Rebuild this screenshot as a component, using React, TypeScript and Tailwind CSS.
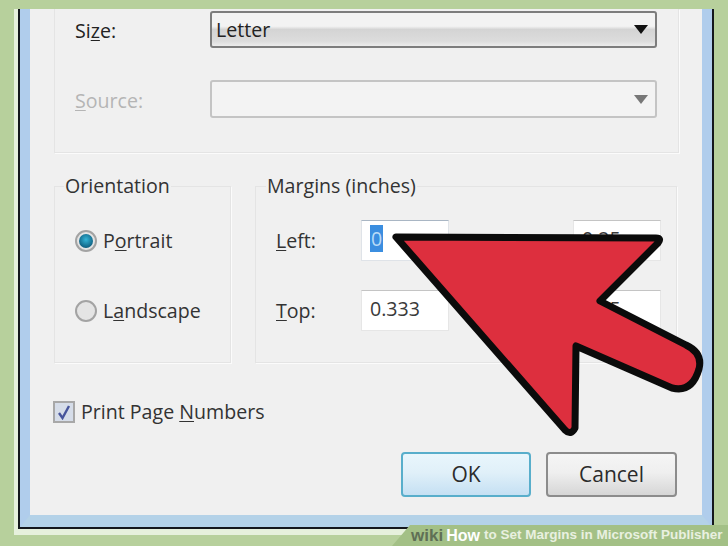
const font = "font-['Open_Sans','Noto_Sans',sans-serif]";

const Caret = ({ color }: { color: string }) => (
  <svg width="14" height="9" viewBox="0 0 14 9" className="shrink-0">
    <path d="M0 0H14L7 9Z" fill={color} />
  </svg>
);

const NumberBox = ({ value, selected, dark }: { value: string; selected?: boolean; dark?: boolean }) => (
  <div
    className={`flex h-[41px] w-[88px] items-center border bg-white pb-1 pl-[8px] text-[19.6px] text-[#3a3a3a] ${
      dark ? "border-[#dfe3e8] border-t-[#a9b6c4]" : "border-[#e6e6e6] border-t-[#c4c4c4]"
    }`}
  >
    {selected ? <span className="bg-[#3b8ee0] px-px leading-[27px] text-[#b9dcf7]">{value}</span> : value}
  </div>
);

const Radio = ({ checked, children }: { checked?: boolean; children: React.ReactNode }) => (
  <div className="flex h-6 items-center gap-[6px]">
    <span className="flex h-[22px] w-[22px] items-center justify-center rounded-full border-2 border-[#a3a3a3] bg-[#e4e4e4]">
      {checked ? (
        <span className="h-[14px] w-[14px] rounded-full bg-[radial-gradient(circle_at_50%_40%,#35b4d6,#0f5f80_75%)]" />
      ) : null}
    </span>
    <span className="text-[19.6px] text-[#333]">{children}</span>
  </div>
);

export default function App() {
  return (
    <div className={`relative h-[546px] w-[728px] overflow-hidden bg-[#b7d09c] pt-[9px] pl-[14px] ${font}`}>
      <div className="h-[526px] w-[700px] border-b-[6px] border-l-[4px] border-[#e6f0dc]">
        <div className="h-full border-x-2 border-b-2 border-[#14171c]">
          <div className="h-full border-x-[10px] border-b-[12px] border-x-[#b0cdec] border-b-[#b4d2e8]">
            <div className="flex h-full flex-col bg-[#f0f0f0] pr-[23px] pl-[24px]">
              {/* page size group, top edge is cropped */}
              <div className="h-[144px] border-x border-b border-[#e4e4e4] shadow-[1px_1px_0_#fbfbfb]">
                <div className="mt-[2px] flex h-[37px] items-center pl-[20px] text-[19.6px] text-[#222]">
                  <span className="mt-[3px] w-[135px]">
                    Si<u className="underline-offset-2">z</u>e:
                  </span>
                  <div className="flex h-[37px] w-[447px] items-center justify-between rounded-[3px] border-2 border-[#7d7d7d] bg-[linear-gradient(#f3f3f3_40%,#d4d4d4_50%,#dcdcdc_85%,#ececec)] pr-[7px] pl-[4px] text-[#222]">
                    Letter
                    <Caret color="#111" />
                  </div>
                </div>
                <div className="mt-[32px] flex h-[38px] items-center pl-[20px] text-[19.6px] text-[#b5b5b5]">
                  <span className="mt-[3px] w-[135px]">
                    <u className="underline-offset-2">S</u>ource:
                  </span>
                  <div className="flex h-[38px] w-[447px] items-center justify-end rounded-[3px] border-2 border-[#c4c4c4] bg-[#f3f3f3] pr-[7px]">
                    <Caret color="#777" />
                  </div>
                </div>
              </div>

              <div className="mt-[21px] flex gap-[24px]">
                <fieldset className="h-[189px] w-[177px] border border-[#e4e4e4] pl-[20px] shadow-[1px_1px_0_#fbfbfb]">
                  <legend className="ml-[-11px] px-px text-[19.6px] leading-6 text-[#333]">Orientation</legend>
                  <div className="flex flex-col gap-[46px] pt-[31px]">
                    <Radio checked>
                      P<u className="underline-offset-2">o</u>rtrait
                    </Radio>
                    <Radio>
                      L<u className="underline-offset-2">a</u>ndscape
                    </Radio>
                  </div>
                </fieldset>
                <fieldset className="h-[189px] w-[422px] border border-[#e4e4e4] pr-[15px] pl-[20px] shadow-[1px_1px_0_#fbfbfb]">
                  <legend className="ml-[-10px] px-px text-[19.6px] leading-6 text-[#333]">Margins (inches)</legend>
                  <div className="flex flex-col gap-[29px] pt-[22px] text-[19.6px] text-[#333]">
                    <div className="flex items-center justify-between">
                      <div className="flex items-center">
                        <span className="w-[85px]">
                          <u className="underline-offset-2">L</u>eft:
                        </span>
                        <NumberBox value="0" selected dark />
                      </div>
                      <NumberBox value="0.25" />
                    </div>
                    <div className="flex items-center justify-between">
                      <div className="flex items-center">
                        <span className="w-[85px]">
                          <u className="underline-offset-2">T</u>op:
                        </span>
                        <NumberBox value="0.333" />
                      </div>
                      <NumberBox value="0.25" />
                    </div>
                  </div>
                </fieldset>
              </div>

              <div className="mt-[37px] -ml-px flex h-6 items-center gap-[6px] text-[19.6px] text-[#333]">
                <span className="flex h-[22px] w-[22px] items-center justify-center border-2 border-[#a8a8a8] bg-[#d6dde9]">
                  <svg width="16" height="16" viewBox="0 0 16 16" fill="none">
                    <path d="M3 9L6.5 14L13 2" stroke="#47559c" strokeWidth="2.4" />
                  </svg>
                </span>
                <span>
                  Print Page <u className="underline-offset-2">N</u>umbers
                </span>
              </div>

              <div className="mt-[28px] flex justify-end gap-[15px] pr-[2px] text-[21px] text-[#2b2b2b]">
                <button className="h-[45px] w-[130px] rounded-[4px] border-2 border-[#58aecb] bg-[linear-gradient(#e9f6fc,#e0f0f9_45%,#c5e0f3)]">
                  OK
                </button>
                <button className="h-[45px] w-[131px] rounded-[4px] border-2 border-[#8c8c8c] bg-[linear-gradient(#f5f5f5,#efefef_45%,#d6d6d6)]">
                  Cancel
                </button>
              </div>
            </div>
          </div>
        </div>
      </div>

      {/* big pointer drawn over the dialog */}
      <svg width="728" height="546" viewBox="0 0 728 546" className="absolute top-0 left-0">
        <path
          d="M396 237L656 238Q662 238 658 243L600 301L686 345Q703 353 699 369Q692 393 672 388L576 346L575 428Q571 436 565 430Z"
          fill="#dd2f3e"
          stroke="#0b0b0b"
          strokeWidth="7"
          strokeLinejoin="round"
        />
      </svg>

      {/* watermark */}
      <div className="absolute right-0 bottom-0 flex h-[21px] w-[336px] items-center bg-[#a3c086] pl-[19px] [clip-path:polygon(18px_0,100%_0,100%_100%,0_100%)] font-['Liberation_Sans',sans-serif] text-[13.5px] font-bold whitespace-nowrap text-[#e9f0e0]">
        <span className="text-[17px] text-[#5f6f55]">wiki</span>
        <span className="ml-[3px] text-[16px] text-white">How</span>
        <span className="ml-1">to Set Margins in Microsoft Publisher</span>
      </div>
    </div>
  );
}
